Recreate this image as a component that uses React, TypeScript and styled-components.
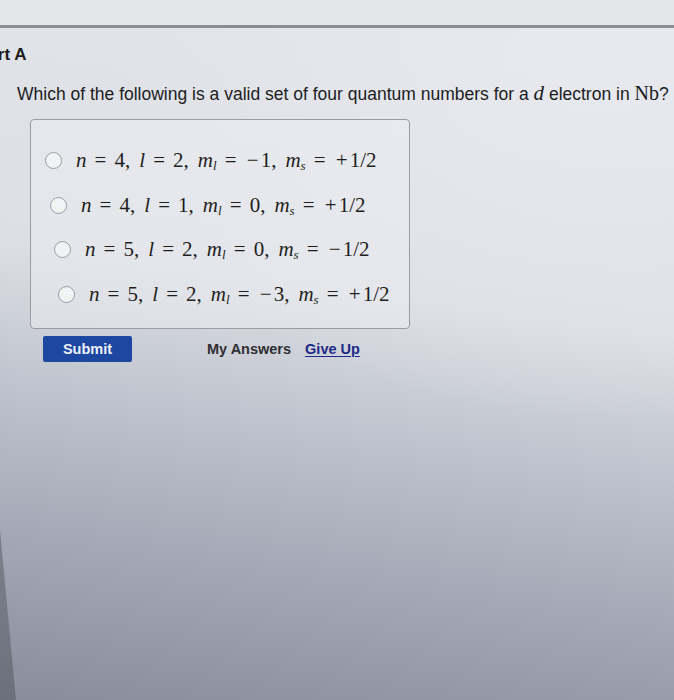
import React from "react";
import styled, { createGlobalStyle } from "styled-components";

const GlobalStyle = createGlobalStyle`
  html, body {
    margin: 0;
    padding: 0;
  }
  body {
    font-family: "Liberation Sans", Arial, sans-serif;
  }
`;

const Screen = styled.div`
  width: 674px;
  height: 700px;
  overflow: hidden;
  position: relative;
  background:
    radial-gradient(ellipse 480px 360px at 600px 60px, rgba(232, 234, 239, 0.9), rgba(232, 234, 239, 0) 100%),
    linear-gradient(188deg, #e3e5ea 0%, #dcdfe4 42%, #bbbfca 63%, #9da1b0 84%, #888c9b 100%);

  /* dark bezel edge creeping in at the bottom left of the photo */
  &::after {
    content: "";
    position: absolute;
    left: 0;
    bottom: 0;
    width: 16px;
    height: 170px;
    background: linear-gradient(180deg, #7c818c, #6b707b);
    clip-path: polygon(0 0, 100% 100%, 0 100%);
  }
`;

const TopStrip = styled.div`
  height: 25px;
  background: #e4e6ea;
  border-bottom: 3px solid #8b8d91;
`;

const PartTitle = styled.h2`
  margin: 17px 0 0 -23px;
  font-size: 17px;
  font-weight: bold;
  color: #1c1c1e;
  line-height: 20px;
`;

const Question = styled.p`
  margin: 18px 0 0 17px;
  font-size: 17.5px;
  line-height: 20px;
  color: #1c1c1e;
  white-space: nowrap;
`;

const MathVar = styled.span`
  font-family: "Liberation Serif", "Times New Roman", serif;
  font-style: italic;
  font-size: 21px;
`;

const MathRoman = styled.span`
  font-family: "Liberation Serif", "Times New Roman", serif;
  font-size: 20px;
`;

const ChoiceBox = styled.div`
  margin: 15px 0 0 30px;
  width: 380px;
  height: 210px;
  box-sizing: border-box;
  border: 1px solid #9a9ca2;
  border-radius: 4px;
  background: rgba(236, 238, 241, 0.5);
  padding: 31px 0 0 14px;
  display: flex;
  flex-direction: column;
  gap: 25.5px;
`;

const ChoiceRow = styled.label<{ $indent: number }>`
  display: flex;
  align-items: center;
  gap: 14px;
  height: 19px;
  padding-left: ${(p) => p.$indent}px;
  cursor: pointer;
`;

const Radio = styled.span`
  width: 17px;
  height: 17px;
  box-sizing: border-box;
  border: 1.5px solid #9b9da3;
  border-radius: 50%;
  background: #f2f3f5;
  flex-shrink: 0;
`;

const Formula = styled.span`
  font-family: "Liberation Serif", "Times New Roman", serif;
  font-size: 21px;
  color: #1e1e20;
  white-space: nowrap;
`;

const I = styled.i`
  font-style: italic;
`;

const Sub = styled.sub`
  font-style: italic;
  font-size: 13px;
  vertical-align: -3px;
  line-height: 0;
`;

const Op = styled.span`
  display: inline-block;
  width: 28px;
  text-align: center;
`;

const Sign = styled.span`
  display: inline-block;
  width: 16px;
  text-align: center;
`;

const Comma = styled.span`
  margin-right: 9px;
`;

const Actions = styled.div`
  display: flex;
  align-items: center;
  margin: 7px 0 0 43px;
`;

const SubmitButton = styled.button`
  width: 89px;
  height: 26px;
  border: none;
  border-radius: 2px;
  background: #1d47a0;
  color: #eef1f8;
  font-family: "Liberation Sans", Arial, sans-serif;
  font-weight: bold;
  font-size: 14.5px;
  cursor: pointer;
`;

const TextLink = styled.a<{ $underline?: boolean; $tone: string; $gap: number }>`
  font-size: 14.5px;
  font-weight: bold;
  color: ${(p) => p.$tone};
  text-decoration: ${(p) => (p.$underline ? "underline" : "none")};
  text-underline-offset: 2px;
  margin-left: ${(p) => p.$gap}px;
  cursor: pointer;
`;

type Choice = { n: string; l: string; ml: string; ms: string; indent: number };

const choices: Choice[] = [
  { n: "4", l: "2", ml: "−1", ms: "+1/2", indent: 0 },
  { n: "4", l: "1", ml: "0", ms: "+1/2", indent: 5 },
  { n: "5", l: "2", ml: "0", ms: "−1/2", indent: 9 },
  { n: "5", l: "2", ml: "−3", ms: "+1/2", indent: 13 },
];

// leading + or − drawn a bit wider, like the math renderer does
const Value: React.FC<{ v: string }> = ({ v }) => {
  const first = v[0];
  if (first === "+" || first === "−") {
    return (
      <>
        <Sign>{first}</Sign>
        {v.slice(1)}
      </>
    );
  }
  return <>{v}</>;
};

const QuantumSet: React.FC<{ c: Choice }> = ({ c }) => (
  <Formula>
    <I>n</I>
    <Op>=</Op>
    {c.n}
    <Comma>,</Comma>
    <I>l</I>
    <Op>=</Op>
    {c.l}
    <Comma>,</Comma>
    <I>m</I>
    <Sub>l</Sub>
    <Op>=</Op>
    <Value v={c.ml} />
    <Comma>,</Comma>
    <I>m</I>
    <Sub>s</Sub>
    <Op>=</Op>
    <Value v={c.ms} />
  </Formula>
);

export default function App() {
  return (
    <>
      <GlobalStyle />
      <Screen>
        <TopStrip />
        <PartTitle>Part A</PartTitle>
        <Question>
          Which of the following is a valid set of four quantum numbers for a{" "}
          <MathVar>d</MathVar> electron in <MathRoman>Nb</MathRoman>?
        </Question>
        <ChoiceBox>
          {choices.map((c, i) => (
            <ChoiceRow key={i} $indent={c.indent}>
              <Radio />
              <QuantumSet c={c} />
            </ChoiceRow>
          ))}
        </ChoiceBox>
        <Actions>
          <SubmitButton>Submit</SubmitButton>
          <TextLink $tone="#2e2f33" $gap={75}>
            My Answers
          </TextLink>
          <TextLink $tone="#1b2a86" $gap={14} $underline>
            Give Up
          </TextLink>
        </Actions>
      </Screen>
    </>
  );
}
